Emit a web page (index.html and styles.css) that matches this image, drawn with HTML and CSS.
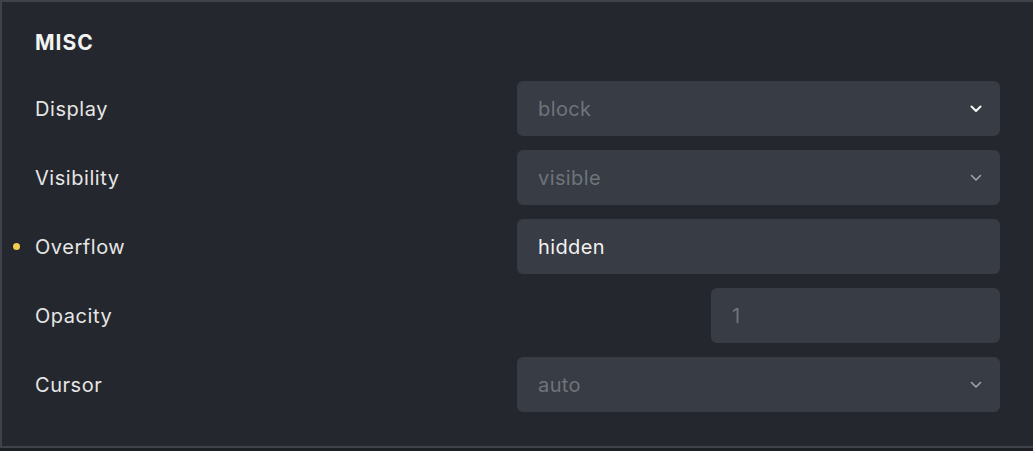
FILE: index.html
```html
<!DOCTYPE html>
<html>
<head>
<meta charset="utf-8">
<link rel="stylesheet" href="styles.css">
</head>
<body>
<div class="panel">
  <h2 class="title">MISC</h2>
  <div class="rows">
    <div class="row">
      <span class="label">Display</span>
      <div class="field select"><span class="ph">block</span>
        <svg class="chev bright" width="12" height="8" viewBox="0 0 12 8"><path d="M1.5 1.5 L6 6 L10.5 1.5" fill="none" stroke="currentColor" stroke-width="2" stroke-linecap="round" stroke-linejoin="round"/></svg>
      </div>
    </div>
    <div class="row">
      <span class="label">Visibility</span>
      <div class="field select"><span class="ph">visible</span>
        <svg class="chev" width="12" height="8" viewBox="0 0 12 8"><path d="M1.5 1.5 L6 6 L10.5 1.5" fill="none" stroke="currentColor" stroke-width="1.5" stroke-linecap="round" stroke-linejoin="round"/></svg>
      </div>
    </div>
    <div class="row">
      <span class="label"><span class="dot"></span>Overflow</span>
      <div class="field"><span class="val">hidden</span></div>
    </div>
    <div class="row">
      <span class="label">Opacity</span>
      <div class="field narrow"><span class="ph">1</span></div>
    </div>
    <div class="row">
      <span class="label">Cursor</span>
      <div class="field select"><span class="ph">auto</span>
        <svg class="chev" width="12" height="8" viewBox="0 0 12 8"><path d="M1.5 1.5 L6 6 L10.5 1.5" fill="none" stroke="currentColor" stroke-width="1.5" stroke-linecap="round" stroke-linejoin="round"/></svg>
      </div>
    </div>
  </div>
</div>
</body>
</html>
```
FILE: styles.css
```css
html, body {
  margin: 0;
  padding: 0;
  background: #1d2025;
}
body {
  width: 1033px;
  height: 451px;
  overflow: hidden;
  font-family: Inter, "Noto Sans", sans-serif;
}
.panel {
  box-sizing: border-box;
  height: 448px;
  background: #24272d;
  border-top: 2px solid #3e434b;
  border-left: 2px solid #3e434b;
  border-bottom: 2px solid #3e434b;
  padding: 24px 33px 0 33px;
}
.title {
  margin: 0 0 21px 0;
  font-size: 21px;
  line-height: 34px;
  font-weight: 700;
  color: #f2f2f2;
  letter-spacing: 1px;
}
.rows {
  display: flex;
  flex-direction: column;
  gap: 14px;
}
.row {
  display: grid;
  grid-template-columns: 1fr 483px;
  align-items: center;
  height: 55px;
}
.label {
  position: relative;
  font-size: 20px;
  color: #e6e6e6;
  letter-spacing: 0.55px;
}
.dot {
  position: absolute;
  left: -22px;
  top: 50%;
  width: 7px;
  height: 7px;
  margin-top: -4px;
  border-radius: 50%;
  background: #f2cd4f;
}
.field {
  box-sizing: border-box;
  height: 55px;
  background: #383c44;
  border-radius: 6px;
  display: flex;
  align-items: center;
  justify-content: space-between;
  padding: 0 18px 0 21px;
  font-size: 20px;
  letter-spacing: 0.4px;
}
.field.narrow {
  width: 289px;
  justify-self: end;
}
.ph {
  color: #6f747b;
}
.val {
  color: #f2f2f2;
}
.chev {
  color: #a3a7ad;
}
.chev.bright {
  color: #f5f5f5;
}
```
